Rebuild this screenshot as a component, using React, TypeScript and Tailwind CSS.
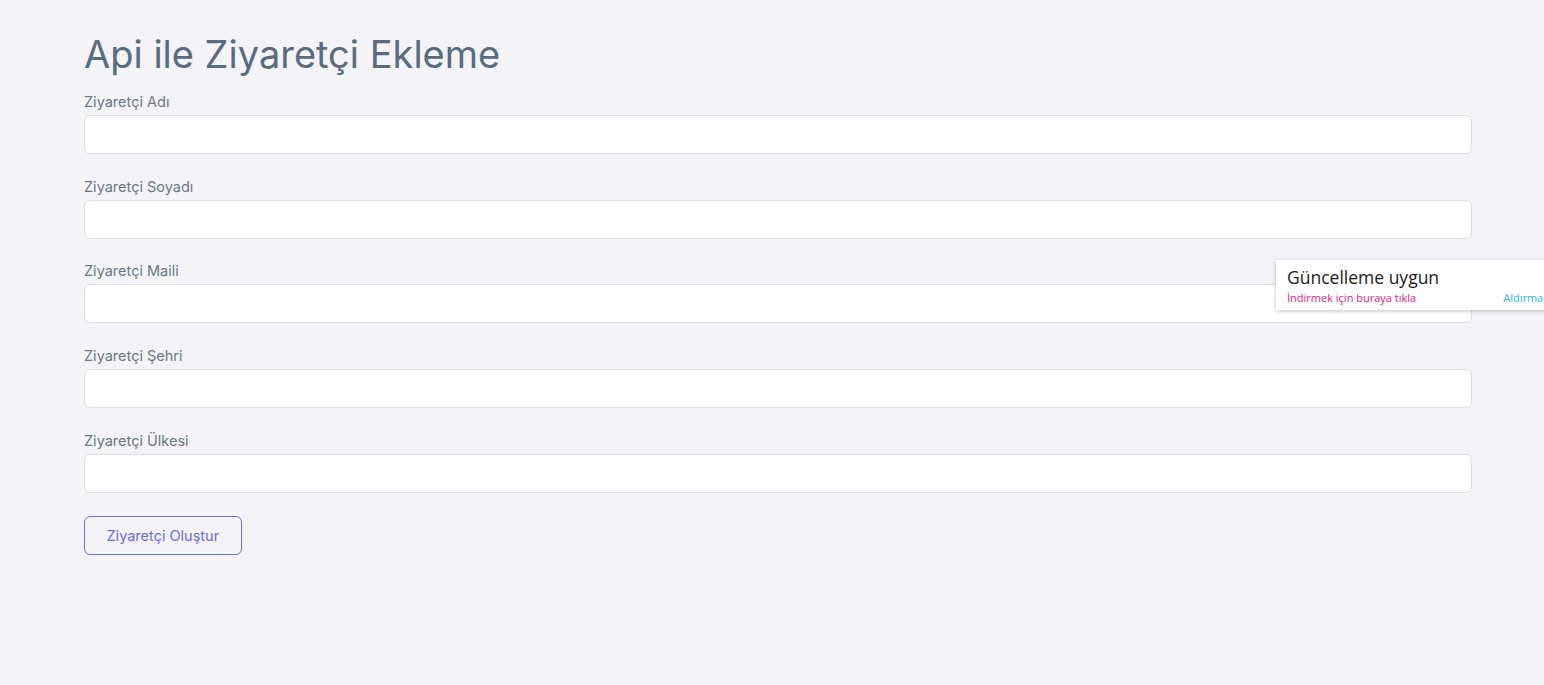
import React from 'react';

const fields = ['Ziyaretçi Adı', 'Ziyaretçi Soyadı', 'Ziyaretçi Maili', 'Ziyaretçi Şehri', 'Ziyaretçi Ülkesi'];

const App: React.FC = () => {
  return (
    <div className="relative min-h-[685px] w-full bg-[#f3f3f8] font-['Inter',sans-serif]">
      <div className="px-[84px] pt-[30px] w-[1556px]">
        <h1 className="text-[38px] leading-[48px] text-[#576b81] font-normal mb-[13px]">
          Api ile Ziyaretçi Ekleme
        </h1>

        {fields.map((label) => (
          <div key={label} className="mb-[21.7px]">
            <label className="block text-[14.5px] leading-[21px] text-[#6b7889] mb-[3px]">{label}</label>
            <input
              type="text"
              className="block w-full h-[39px] bg-white border border-[#dcdce6] rounded-[6px] px-3 outline-none"
            />
          </div>
        ))}

        <button className="mt-[2px] h-[39px] px-[21.5px] border border-[#6e6ef6] rounded-[6px] text-[14.5px] text-[#6b6bea] bg-transparent">
          Ziyaretçi Oluştur
        </button>
      </div>

      {/* update toast */}
      <div className="absolute left-[1276px] top-[260px] w-[280px] h-[50px] bg-white shadow-[0_1px_4px_rgba(0,0,0,0.25)] pl-[11px] pt-[6px] font-['Open_Sans',sans-serif]">
        <div className="text-[17.5px] leading-[22px] text-[#1a1a1a]">Güncelleme uygun</div>
        <div className="flex text-[11px] leading-[16px] mt-[2px]">
          <span className="text-[#e8188c]">İndirmek için buraya tıkla</span>
          <span className="ml-[87px] text-[#2db8e8]">Aldırma</span>
        </div>
      </div>
    </div>
  );
};

export default App;
